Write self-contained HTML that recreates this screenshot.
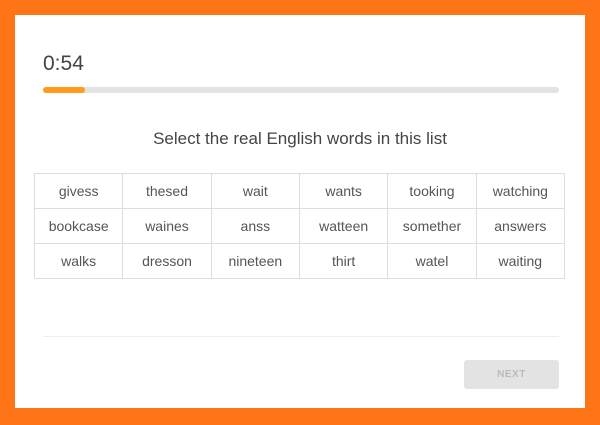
<!DOCTYPE html>
<html><head><style>
html,body{margin:0;padding:0}
body{width:600px;height:425px;background:#ff7417;position:relative;overflow:hidden;font-family:"Liberation Sans",sans-serif}
.panel{position:absolute;left:15px;top:15px;width:570px;height:393px;background:#fff}
.timer{position:absolute;left:43px;top:52px;font-size:21px;color:#444}
.bar{position:absolute;left:43px;top:87px;width:516px;height:6px;background:#e3e3e3;border-radius:3px}
.fill{position:absolute;left:43px;top:87px;width:42px;height:6px;background:#ff9a1f;border-radius:3px}
.title{position:absolute;left:0;width:600px;top:129px;text-align:center;font-size:17px;color:#444}
table{position:absolute;left:34px;top:173px;width:531px;border-collapse:collapse;border:1px solid #777;table-layout:fixed}
td{border:1px solid #ddd;text-align:center;font-size:14px;color:#555;padding:0;height:34px}
.hr{position:absolute;left:43px;top:336px;width:516px;height:1px;background:#eee}
.btn{position:absolute;left:464px;top:360px;width:95px;height:29px;background:#e3e3e3;border-radius:3px;color:#bbb;font-size:10px;font-weight:bold;text-align:center;line-height:29px;letter-spacing:.5px}
</style></head><body>
<div class="panel"></div>
<div class="timer">0:54</div>
<div class="bar"></div><div class="fill"></div>
<div class="title">Select the real English words in this list</div>
<table>
<tr><td>givess</td><td>thesed</td><td>wait</td><td>wants</td><td>tooking</td><td>watching</td></tr>
<tr><td>bookcase</td><td>waines</td><td>anss</td><td>watteen</td><td>somether</td><td>answers</td></tr>
<tr><td>walks</td><td>dresson</td><td>nineteen</td><td>thirt</td><td>watel</td><td>waiting</td></tr>
</table>
<div class="hr"></div>
<div class="btn">NEXT</div>
</body></html>
